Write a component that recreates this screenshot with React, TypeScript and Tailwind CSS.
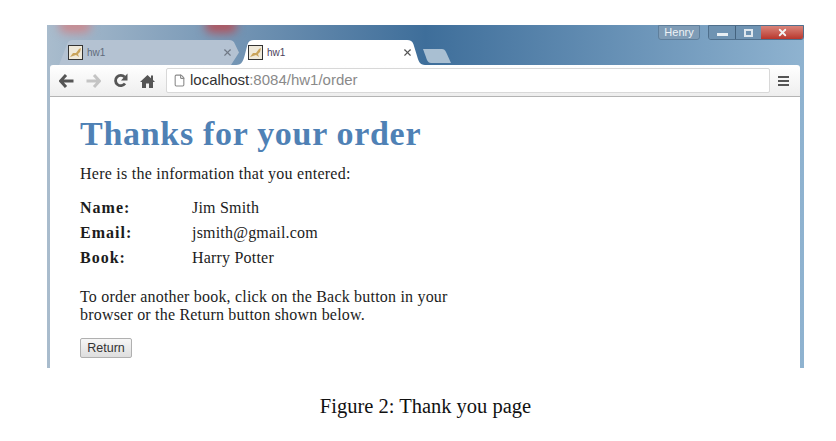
import { File, X } from "lucide-react";

function Favicon() {
  return (
    <svg width="15" height="15" viewBox="0 0 15 15" className="shrink-0">
      <rect x="0.5" y="0.5" width="14" height="14" fill="#efe9da" stroke="#333" />
      <path d="M2 12 L5 8 L8 8 L11 4 L13 3 L12 7 L10 9 L11 12 L8 10 L5 11 Z" fill="#c9a35a" />
    </svg>
  );
}

function Arrow({ color, flip }: { color: string; flip?: boolean }) {
  return (
    <svg width="15" height="14" viewBox="0 0 15 14" className={flip ? "-scale-x-100" : ""}>
      <path d="M7 1 L1.5 7 L7 13 M2 7 L14.5 7" fill="none" stroke={color} strokeWidth="3" />
    </svg>
  );
}

function Reload() {
  return (
    <svg width="15" height="15" viewBox="0 0 15 15">
      <path d="M12 10.5 A5.2 5.2 0 1 1 11.6 4" fill="none" stroke="#555" strokeWidth="2.8" />
      <path d="M14.5 0.5 L14.5 7.5 L8 7.5 Z" fill="#555" />
    </svg>
  );
}

function HomeIcon() {
  return (
    <svg width="15" height="14" viewBox="0 0 15 14">
      <path d="M7.5 1 L11 4.2 L11 1.5 L13 1.5 L13 6 L15 8 L13 8 L13 14 L9 14 L9 9.5 L6 9.5 L6 14 L2 14 L2 8 L0 8 Z" fill="#555" />
    </svg>
  );
}

function Tab({ active, width }: { active?: boolean; width: string }) {
  return (
    <div className={`relative h-[25px] ${width} shrink-0`}>
      <svg className="absolute inset-0 w-full h-full" viewBox="0 0 180 24" preserveAspectRatio="none">
        <path
          d={active ? "M0 24 C6 24 7 20 9 12 L11 4 C12 1 14 0 17 0 L163 0 C166 0 168 1 169 4 L172 14 C174 21 175 24 180 24 Z" : "M0 24 L8 4 C9 1 11 0 14 0 L170 0 C173 0 175 1 176 4 L180 12 L172 24 Z"}
          fill={active ? "#ffffff" : "#b4c2d2"}
        />
      </svg>
      <div className={`relative h-full flex items-center ${active ? "pl-[12px] pr-[12px]" : "pl-[9px] pr-[6px]"}`}>
        <Favicon />
        <span className={`ml-[4px] text-[10px] font-['Liberation_Sans',sans-serif] ${active ? "text-[#4a3f5c]" : "text-[#5f6b7c]"}`}>hw1</span>
        <X className={`ml-auto ${active ? "text-[#555]" : "text-[#6f7885]"}`} size={11} strokeWidth={2.5} />
      </div>
    </div>
  );
}

export default function App() {
  return (
    <div className="w-[836px] h-[441px] bg-white overflow-hidden pt-[25px]">
      <div className="relative ml-[47px] w-[757px] h-[343px] flex flex-col bg-gradient-to-r from-[#a9bccd] via-[#3e6e9a] to-[#8fb3d0] overflow-hidden">
        {/* blurred bits of desktop behind the glass */}
        <div className="absolute left-[12px] top-[-6px] w-[32px] h-[14px] rounded-full bg-[#c98a90] blur-[5px]" />
        <div className="absolute left-[158px] top-[-6px] w-[32px] h-[14px] rounded-full bg-[#b0545e] blur-[5px]" />

        {/* window caption buttons */}
        <div className="absolute left-[611px] top-[0px] w-[42px] h-[15px] rounded-b-[3px] border border-[#5f7f9c] bg-[#7f9cb6] flex items-center justify-center">
          <span className="text-[11px] leading-none text-[#eef2f5] font-['Liberation_Sans',sans-serif]">Henry</span>
        </div>
        <div className="absolute right-0 top-[0px] h-[15px] w-[96px] flex rounded-b-[3px] border border-[#4f6f8c] overflow-hidden">
          <div className="w-[27px] bg-[#6f93b2] border-r border-[#44627d] flex items-end justify-center pb-[3px]">
            <div className="w-[11px] h-[3px] bg-[#e8eef3]" />
          </div>
          <div className="w-[25px] bg-[#6f93b2] flex items-center justify-center">
            <div className="w-[9px] h-[8px] border-2 border-[#dfe7ee]" />
          </div>
          <div className="flex-1 bg-gradient-to-b from-[#d9837a] to-[#b8352c] flex items-center justify-center">
            <X className="text-[#f3f3f3]" size={11} strokeWidth={4} />
          </div>
        </div>

        {/* tab strip */}
        <div className="flex items-end h-[40px] pl-[12px] shrink-0">
          <Tab width="w-[180px]" />
          <div className="ml-[-3px]">
            <Tab active width="w-[189px]" />
          </div>
          <svg width="30" height="16" viewBox="0 0 30 16" className="ml-[-2px] mb-[1px]">
            <path d="M0 1 L19 1 C21 1 22 2 23 4 L28 15 L8 15 C6 15 5 14 4 12 Z" fill="#a9bfd2" />
          </svg>
        </div>

        {/* toolbar */}
        <div className="ml-[3px] mr-[4px] h-[32px] shrink-0 flex items-center bg-gradient-to-b from-white to-[#eeeeee] border-b border-[#b4b4b4] rounded-t-[3px]">
          <div className="w-[116px] flex items-center pl-[9px] gap-[12px]">
            <Arrow color="#555" />
            <Arrow color="#c4c4c4" flip />
            <Reload />
            <HomeIcon />
          </div>
          <div className="w-[604px] h-[25px] flex items-center bg-white border border-[#d8d8d8] rounded-[2px] pl-[6px]">
            <File size={13} className="text-[#8a8a8a] shrink-0" />
            <span className="ml-[4px] text-[15px] font-['Liberation_Sans',sans-serif] text-[#333]">
              localhost<span className="text-[#8a8a8a]">:8084/hw1/order</span>
            </span>
          </div>
          <div className="ml-[8px] w-[11px] flex flex-col gap-[2px]">
            <div className="h-[2px] bg-[#555]" />
            <div className="h-[2px] bg-[#555]" />
            <div className="h-[2px] bg-[#555]" />
          </div>
        </div>

        {/* page content */}
        <div className="ml-[3px] mr-[4px] flex-1 bg-white pl-[30px] pt-[17px] text-[#1c1c1c] font-['Liberation_Serif',serif]">
          <h1 className="text-[34px] leading-[40px] font-bold tracking-[0.7px] text-[#4f81b5]">Thanks for your order</h1>
          <p className="mt-[10px] text-[16px] leading-[20px] tracking-[0.25px]">Here is the information that you entered:</p>
          <div className="mt-[11px] grid grid-cols-[112px_1fr] auto-rows-[25px] items-center text-[16px] tracking-[0.2px]">
            <b className="tracking-[1px]">Name:</b>
            <span>Jim Smith</span>
            <b className="tracking-[1px]">Email:</b>
            <span>jsmith@gmail.com</span>
            <b className="tracking-[1px]">Book:</b>
            <span>Harry Potter</span>
          </div>
          <p className="mt-[18px] w-[385px] text-[16px] leading-[18px] tracking-[0.2px]">
            To order another book, click on the Back button in your browser or the Return button shown below.
          </p>
          <button className="mt-[14px] w-[52px] h-[20px] rounded-[2px] border border-[#b0b0b0] bg-gradient-to-b from-[#f6f6f6] to-[#dedede] text-[12.5px] leading-none text-[#333] font-['Liberation_Sans',sans-serif]">
            Return
          </button>
        </div>
      </div>

      <p className="mt-[26px] text-center text-[20.5px] leading-[24px] ml-[15px] text-[#111] font-['Liberation_Serif',serif]">
        Figure 2: Thank you page
      </p>
    </div>
  );
}
